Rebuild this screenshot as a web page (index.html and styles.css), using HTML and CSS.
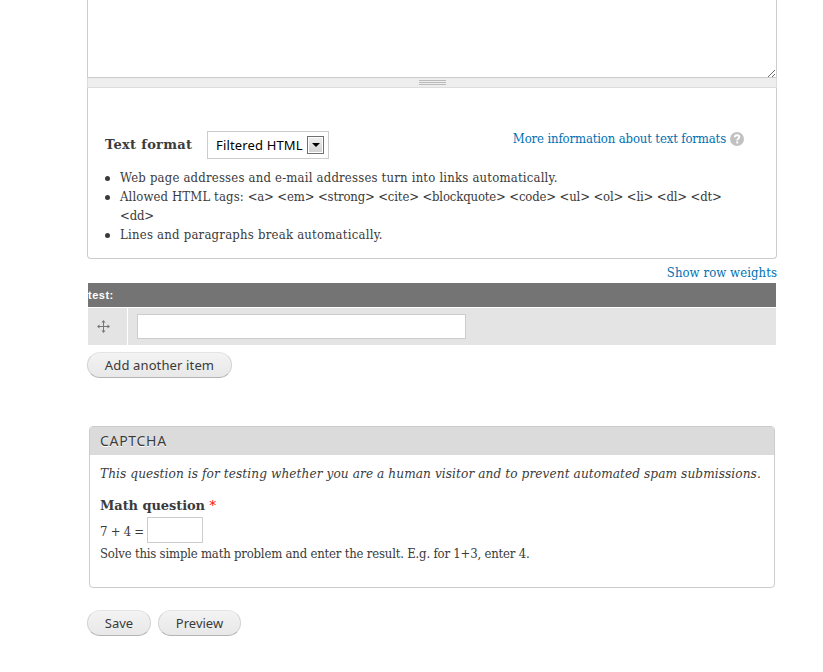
FILE: index.html
```html
<!DOCTYPE html>
<html lang="en">

<head>
    <meta charset="UTF-8">
    <meta name="viewport" content="width=device-width, initial-scale=1.0">
    <title>Create content</title>
    <link rel="stylesheet" href="styles.css">
</head>

<body>
    <form class="node-form">
        <div class="text-area">
            <svg class="resizer" width="8" height="8" viewBox="0 0 8 8" shape-rendering="crispEdges">
                <path d="M0 7h1v1H0zM1 6h1v1H1zM2 5h1v1H2zM3 4h1v1H3zM4 3h1v1H4zM5 2h1v1H5zM6 1h1v1H6zM4 7h1v1H4zM5 6h1v1H5zM6 5h1v1H6z" fill="#666" />
            </svg>
        </div>
        <div class="grippie"><span class="grip"></span></div>

        <div class="filter-wrapper">
            <div class="filter-top">
                <label class="filter-label"><span class="t-format">Text format</span></label>
                <div class="select">
                    <span class="t-select">Filtered HTML</span>
                    <span class="select-arrow"></span>
                </div>
                <a class="filter-help">
                    <span class="t-help">More information about text formats</span>
                    <svg class="help-icon" width="14" height="14" viewBox="0 0 14 14">
                        <circle cx="7" cy="7" r="7" fill="#c1c1c1" />
                        <path d="M4.700 5.300C4.800 3.900 5.700 3.200 7 3.200c1.400 0 2.300.8 2.300 1.900C9.300 6.700 7.200 6.600 7.200 8.600" fill="none" stroke="#fff" stroke-width="1.900" />
                        <rect x="6.200" y="9.500" width="2" height="1.900" fill="#fff" />
                    </svg>
                </a>
            </div>
            <ul class="tips">
                <li><span class="t-tip1">Web page addresses and e-mail addresses turn into links automatically.</span></li>
                <li><span class="t-allowed">Allowed HTML tags: </span><span class="t-tip2">&lt;a&gt; &lt;em&gt; &lt;strong&gt; &lt;cite&gt; &lt;blockquote&gt; &lt;code&gt; &lt;ul&gt; &lt;ol&gt; &lt;li&gt; &lt;dl&gt; &lt;dt&gt;<br>&lt;dd&gt;</span></li>
                <li><span class="t-tip3">Lines and paragraphs break automatically.</span></li>
            </ul>
        </div>

        <div class="weights"><a class="t-weights">Show row weights</a></div>

        <div class="table">
            <div class="table-head"><span class="t-test">test:</span></div>
            <div class="table-row">
                <div class="drag-cell">
                    <svg width="13" height="13" viewBox="0 0 13 13">
                        <path d="M6.500 1v11M1 6.500h11" stroke="#777" fill="none" />
                        <path d="M6.500 0l2 2.500h-4zM6.500 13l2-2.500h-4zM0 6.500l2.500-2v4zM13 6.500l-2.500-2v4z" fill="#777" />
                    </svg>
                </div>
                <div class="item-cell"><div class="input input-item"></div></div>
            </div>
        </div>

        <button type="button" class="btn btn-add"><span class="t-add">Add another item</span></button>

        <div class="captcha">
            <div class="captcha-title"><span class="t-captcha">CAPTCHA</span></div>
            <div class="captcha-body">
                <div class="captcha-desc"><span class="t-desc">This question is for testing whether you are a human visitor and to prevent automated spam submissions.</span></div>
                <div class="captcha-label"><span class="t-math">Math question</span> <span class="required">*</span></div>
                <div class="captcha-field"><span class="t-sum">7 + 4 =</span><div class="input input-sum"></div></div>
                <div class="captcha-hint"><span class="t-hint">Solve this simple math problem and enter the result. E.g. for 1+3, enter 4.</span></div>
            </div>
        </div>

        <div class="actions">
            <button type="button" class="btn btn-save"><span class="t-save">Save</span></button>
            <button type="button" class="btn btn-preview"><span class="t-preview">Preview</span></button>
        </div>
    </form>
</body>

</html>
```
FILE: styles.css
```css
:root {
    --line: #ccc;
    --text: #3b3b3b;
    --link: #0071b3;
    --sans: "Noto Sans", "Open Sans", sans-serif;
}

* {
    box-sizing: border-box;
}

body {
    margin: 0;
    background-color: #fff;
    color: var(--text);
    font-family: "DejaVu Serif Condensed", "DejaVu Serif", serif;
    font-size: 13px;
    white-space: nowrap;
}

.node-form {
    width: 690px;
    margin-left: 87px;
}

/* textarea */
.text-area {
    height: 78px;
    border: 1px solid var(--line);
    border-top: 0;
    display: flex;
    align-items: flex-end;
    justify-content: flex-end;
}

.resizer {
    display: block;
}

.grippie {
    height: 10px;
    background-color: #eee;
    border: 1px solid #ddd;
    border-top: 0;
    display: flex;
    justify-content: center;
    padding-top: 2px;
}

.grip {
    width: 27px;
    height: 5px;
    border-top: 1px solid #bbb;
    border-bottom: 1px solid #bbb;
    background: linear-gradient(#eee 1px, #bbb 1px, #bbb 2px, #eee 2px);
}

.filter-wrapper {
    height: 171px;
    border: 1px solid var(--line);
    border-top: 0;
    border-radius: 0 0 4px 4px;
    padding: 43px 32px 0 17px;
}

.filter-top {
    display: flex;
    height: 28px;
}

.filter-label {
    width: 102px;
    line-height: 28px;
    font-family: "DejaVu Serif", serif;
    font-weight: bold;
}

.t-format {
    letter-spacing: 0.3px;
}

.select {
    width: 122px;
    height: 28px;
    border: 1px solid var(--line);
    display: flex;
    align-items: center;
    padding: 0 4px 0 8px;
    justify-content: space-between;
    font-family: var(--sans);
    color: #000;
}

.t-select {
    letter-spacing: 0.15px;
}

.select-arrow {
    width: 17px;
    height: 18px;
    border: 1px solid #707070;
    box-shadow: inset 0 0 0 1px #fff;
    background: linear-gradient(#f0f0f0, #d0d0d0);
    display: flex;
    align-items: center;
    justify-content: center;
}

.select-arrow::before {
    content: '';
    border: 4px solid transparent;
    border-top-color: #000;
    border-bottom: 0;
}

.filter-help {
    margin-left: auto;
    height: 15px;
    display: flex;
    align-items: center;
    gap: 4px;
    color: var(--link);
}

.t-help {
    letter-spacing: -0.14px;
}

.tips {
    margin: 9px 0 0;
    padding: 0 0 0 15px;
    line-height: 19px;
    list-style: none;
}

.tips li::before {
    content: '';
    float: left;
    width: 5px;
    height: 5px;
    border-radius: 50%;
    background-color: var(--text);
    margin: 8px 0 0 -15px;
}

.t-tip1 {
    letter-spacing: 0.2px;
}

.t-allowed {
    letter-spacing: 0.12px;
}

.t-tip2 {
    letter-spacing: -0.15px;
}

.t-tip3 {
    letter-spacing: 0.23px;
}

.weights {
    height: 24px;
    line-height: 28px;
    text-align: right;
    color: var(--link);
}

.t-weights {
    letter-spacing: 0.07px;
}

/* draggable table */
.table {
    margin: 0 1px;
}

.table-head {
    height: 24px;
    line-height: 24px;
    background-color: #747474;
    color: #fff;
    font-family: "Liberation Sans", Arial, sans-serif;
    font-weight: bold;
    font-size: 11px;
}

.t-test {
    letter-spacing: 0.5px;
}

.table-row {
    display: flex;
    gap: 1px;
    margin-top: 1px;
    height: 37px;
}

.drag-cell {
    width: 39px;
    background-color: #e4e4e4;
    padding: 12px 0 0 9px;
}

.item-cell {
    flex: 1;
    background-color: #e4e4e4;
    padding: 6px 9px;
}

.input {
    border: 1px solid var(--line);
    background-color: #fff;
}

.input-item {
    width: 329px;
    height: 25px;
}

.btn {
    display: block;
    height: 26px;
    padding: 0;
    border: 1px solid #e4e4e4;
    border-color: #e4e4e4 #d2d2d2 #b4b4b4;
    border-radius: 13px;
    background: linear-gradient(#f3f3f3, #e8e8e8);
    color: #3a3a3a;
    font-family: var(--sans);
    font-size: 13px;
    text-align: center;
}

.btn-add {
    width: 145px;
    margin-top: 7px;
}

.t-add {
    letter-spacing: 0.13px;
}

/* captcha */
.captcha {
    width: 686px;
    height: 162px;
    margin: 48px 0 0 2px;
    border: 1px solid var(--line);
    border-radius: 4px;
    overflow: hidden;
}

.captcha-title {
    height: 28px;
    line-height: 27px;
    padding-left: 10px;
    background-color: #dbdbdb;
    font-family: var(--sans);
    text-shadow: 0 1px 0 #fff;
}

.t-captcha {
    font-size: 14px;
    letter-spacing: 0.7px;
}

.captcha-body {
    padding: 8px 10px 0;
}

.captcha-desc {
    height: 20px;
    line-height: 20px;
    font-size: 13.5px;
    font-style: italic;
}

.t-desc {
    letter-spacing: 0.08px;
}

.captcha-label {
    height: 20px;
    line-height: 21px;
    margin-top: 12px;
    font-family: "DejaVu Serif", serif;
    font-weight: bold;
}

.t-math {
    letter-spacing: -0.08px;
}

.required {
    color: #f00;
    font-size: 13px;
    font-weight: normal;
}

.captcha-field {
    display: flex;
    height: 26px;
    line-height: 30px;
    margin-top: 2px;
}

.t-sum {
    width: 47px;
    letter-spacing: -0.25px;
}

.input-sum {
    width: 56px;
    height: 26px;
}

.captcha-hint {
    line-height: 22px;
}

.t-hint {
    letter-spacing: -0.19px;
}

.actions {
    display: flex;
    gap: 7px;
    margin-top: 22px;
}

.btn-save {
    width: 64px;
}

.btn-preview {
    width: 83px;
}
```
